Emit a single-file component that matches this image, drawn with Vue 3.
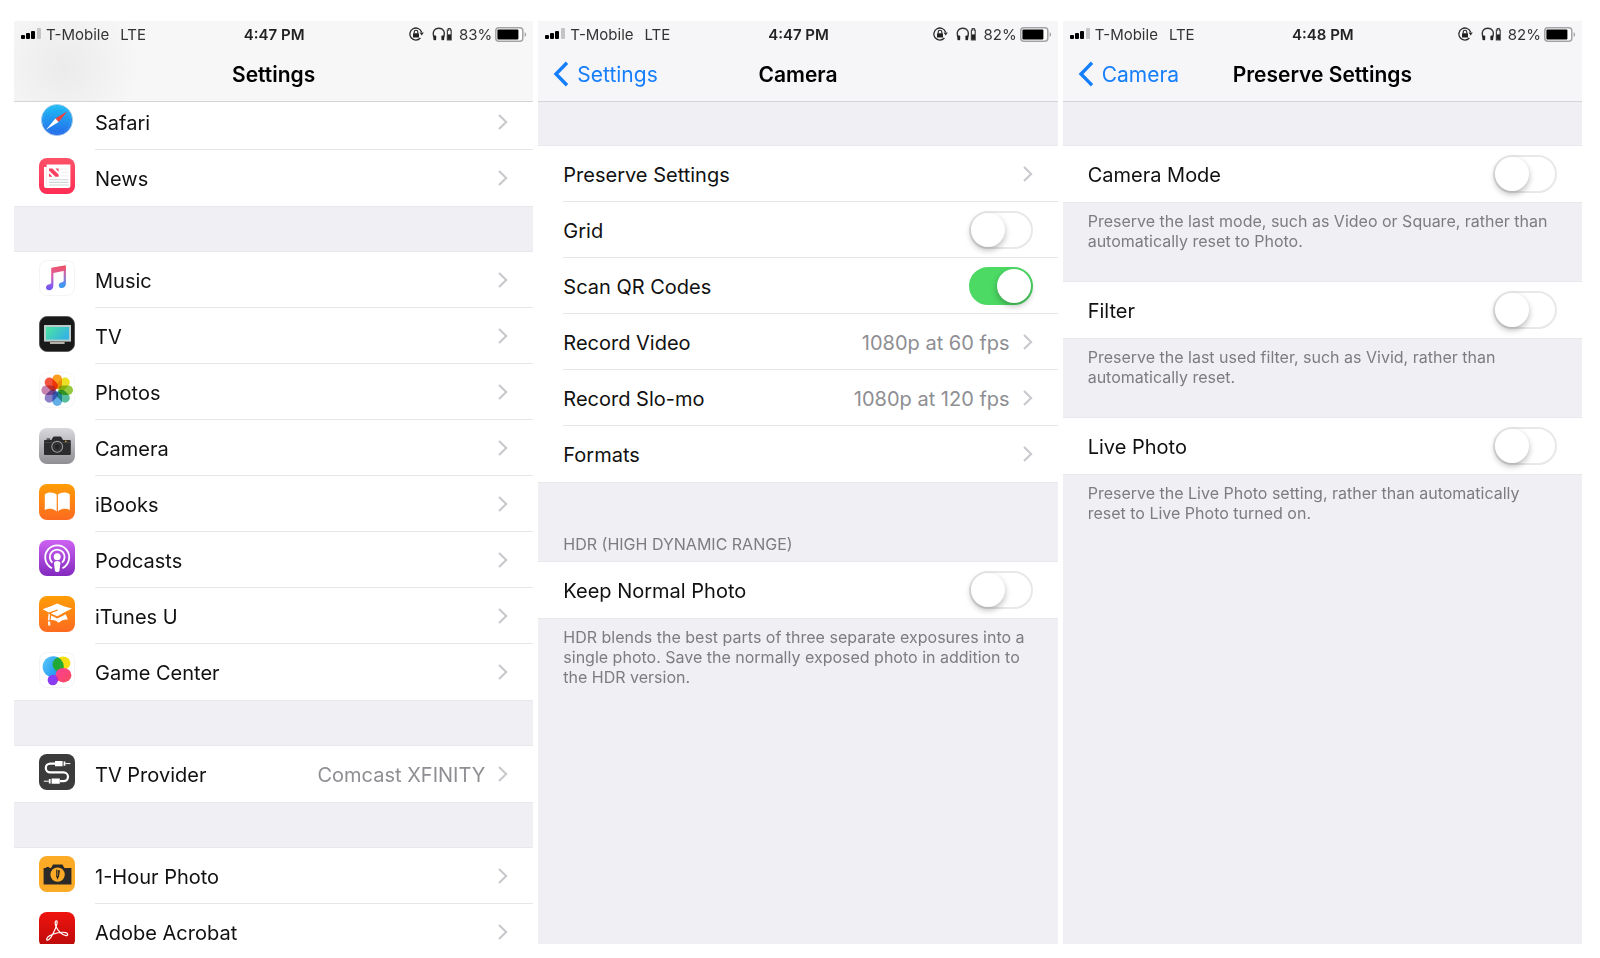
<script setup>
import { ref } from "vue";

const appGroups = [
  [
    { name: "Safari", icon: "safari" },
    { name: "News", icon: "news" },
  ],
  [
    { name: "Music", icon: "music" },
    { name: "TV", icon: "tv" },
    { name: "Photos", icon: "photos" },
    { name: "Camera", icon: "camera" },
    { name: "iBooks", icon: "ibooks" },
    { name: "Podcasts", icon: "podcasts" },
    { name: "iTunes U", icon: "itunesu" },
    { name: "Game Center", icon: "gamecenter" },
  ],
  [{ name: "TV Provider", icon: "tvprovider", value: "Comcast XFINITY" }],
  [
    { name: "1-Hour Photo", icon: "onehour" },
    { name: "Adobe Acrobat", icon: "acrobat" },
  ],
];

const cameraRows = ref([
  { name: "Preserve Settings" },
  { name: "Grid", toggle: true, on: false },
  { name: "Scan QR Codes", toggle: true, on: true },
  { name: "Record Video", value: "1080p at 60 fps" },
  { name: "Record Slo-mo", value: "1080p at 120 fps" },
  { name: "Formats" },
]);

const keepNormal = ref(false);

const preserveRows = ref([
  {
    name: "Camera Mode",
    on: false,
    note: "Preserve the last mode, such as Video or Square, rather than automatically reset to Photo.",
  },
  {
    name: "Filter",
    on: false,
    note: "Preserve the last used filter, such as Vivid, rather than automatically reset.",
  },
  {
    name: "Live Photo",
    on: false,
    note: "Preserve the Live Photo setting, rather than automatically reset to Live Photo turned on.",
  },
]);

const screens = [
  { id: "settings", title: "Settings", time: "4:47 PM", battery: 83 },
  { id: "camera", title: "Camera", back: "Settings", time: "4:47 PM", battery: 82 },
  { id: "preserve", title: "Preserve Settings", back: "Camera", time: "4:48 PM", battery: 82 },
];

const petals = [
  "#fb9d1e",
  "#ece024",
  "#93c83f",
  "#55bd9c",
  "#62aee6",
  "#8d80c8",
  "#c884b0",
  "#f2543f",
];
</script>

<template>
  <div class="screens">
    <section v-for="s in screens" :key="s.id" class="screen">
      <header class="top" :class="{ blurred: s.id === 'settings' }">
        <div class="status">
          <div class="status-left">
            <svg class="signal" width="21" height="12" viewBox="0 0 21 12">
              <rect x="0" y="7" width="4" height="4" rx="1" />
              <rect x="5" y="5" width="4" height="6" rx="1" />
              <rect x="10" y="3" width="4" height="8" rx="1" />
              <rect x="16" y="0" width="4" height="11" rx="1" fill="#c4c4c6" />
            </svg>
            <span>T-Mobile</span>
            <span class="network">LTE</span>
          </div>
          <div class="time">{{ s.time }}</div>
          <div class="status-right">
            <svg width="15" height="14" viewBox="0 0 15 14">
              <path
                d="M12.6 5.2A6 6 0 1 0 11.4 11"
                fill="none"
                stroke="#2a2a2a"
                stroke-width="1.3"
              />
              <path d="M10.6 5.6h4.2l-2.1 3z" fill="#2a2a2a" />
              <rect x="4" y="6.2" width="6" height="4.2" rx="0.5" fill="#222" />
              <path
                d="M5.2 6.4V5a1.8 1.8 0 0 1 3.6 0v1.4"
                fill="none"
                stroke="#222"
                stroke-width="1.1"
              />
            </svg>
            <svg class="phones" width="21" height="14" viewBox="0 0 21 14">
              <path
                d="M2.2 10.5C-.2 5 2.4 1.2 6.8 1.2s7 3.8 4.6 9.3"
                fill="none"
                stroke="#333"
                stroke-width="1.4"
              />
              <rect x="1.4" y="8.4" width="2.8" height="4.8" rx="1" fill="#222" />
              <rect x="9.4" y="8.4" width="2.8" height="4.8" rx="1" fill="#222" />
              <path
                d="M15.4 3.2h.9V1.6h2v1.6h.9v9.8h-3.8z"
                fill="none"
                stroke="#444"
                stroke-width="1.2"
              />
              <rect x="15.8" y="7.4" width="3.2" height="5.4" fill="#222" />
            </svg>
            <span>{{ s.battery }}%</span>
            <svg class="battery" width="32" height="15" viewBox="0 0 32 15">
              <rect
                x="0.8"
                y="0.8"
                width="27"
                height="13.4"
                rx="3"
                fill="#fff"
                stroke="#a3a3a5"
                stroke-width="1.5"
              />
              <rect x="2.4" y="2.6" width="21" height="9.8" rx="1" />
              <path d="M29.6 5.2c2 .6 2 4 0 4.6z" fill="#a3a3a5" />
            </svg>
          </div>
        </div>
        <nav class="navbar">
          <div class="nav-side">
            <a v-if="s.back" class="back" href="#">
              <svg width="16" height="26" viewBox="0 0 16 26">
                <path
                  d="M14 1.8L3 13l11 11.2"
                  fill="none"
                  stroke="#157efb"
                  stroke-width="3.4"
                />
              </svg>
              {{ s.back }}
            </a>
          </div>
          <h1>{{ s.title }}</h1>
          <div class="nav-side"></div>
        </nav>
      </header>

      <!-- Settings: app list, scrolled a little under the bar -->
      <main v-if="s.id === 'settings'" class="body scrolled">
        <ul v-for="(group, g) in appGroups" :key="g" class="group">
          <li v-for="app in group" :key="app.name">
            <a class="row" href="#">
              <svg class="app-icon" width="36" height="36" viewBox="0 0 36 36">
                <g v-if="app.icon === 'safari'">
                  <defs>
                    <linearGradient id="safari-bg" x1="0" y1="0" x2="0" y2="1">
                      <stop offset="0" stop-color="#1fc0f5" />
                      <stop offset="1" stop-color="#2568ea" />
                    </linearGradient>
                  </defs>
                  <circle cx="18" cy="18" r="15.6" fill="url(#safari-bg)" stroke="#a9cdea" stroke-width="0.8" />
                  <circle cx="18" cy="18" r="13.4" fill="none" stroke="#7cc4f4" stroke-width="1" stroke-dasharray="0.6 1.5" opacity="0.6" />
                  <path d="M28.4 9.2L16.4 16.4L19.6 20z" fill="#f0403c" />
                  <path d="M7 27.8L16.4 16.4L19.6 20z" fill="#fff" />
                </g>
                <g v-else-if="app.icon === 'news'">
                  <defs>
                    <linearGradient id="news-bg" x1="0" y1="0" x2="0" y2="1">
                      <stop offset="0" stop-color="#fc5268" />
                      <stop offset="1" stop-color="#fd2d55" />
                    </linearGradient>
                  </defs>
                  <rect width="36" height="36" rx="8" fill="url(#news-bg)" />
                  <path d="M5 9h2.6V6.6h23.8V28a2 2 0 0 1-2 2H7a2 2 0 0 1-2-2z" fill="#fff" />
                  <path d="M7.4 9v18" stroke="#fbd0d8" stroke-width="0.6" />
                  <path d="M10 10.4h3.4l6.2 6.2v2.2h-3.2L10 12.6z" fill="#f7405f" />
                  <path d="M16.4 10.4h3.2v3.4zM10 15.2l3.4 3.6H10z" fill="#f7405f" />
                  <path d="M22 11h7.6M22 14.4h7.6M22 17.8h7.6" stroke="#f3f1f3" stroke-width="1.2" />
                  <path d="M10 21.8h19.6M10 24.4h19.6M10 27h19.6" stroke="#cfd4d6" stroke-width="1.1" />
                </g>
                <g v-else-if="app.icon === 'music'">
                  <defs>
                    <linearGradient id="music-a" gradientUnits="userSpaceOnUse" x1="18" y1="5" x2="14" y2="30">
                      <stop offset="0" stop-color="#ee5064" />
                      <stop offset="0.4" stop-color="#e0609c" />
                      <stop offset="0.75" stop-color="#9a5fe6" />
                      <stop offset="1" stop-color="#6f55ee" />
                    </linearGradient>
                    <linearGradient id="music-b" gradientUnits="userSpaceOnUse" x1="26" y1="6" x2="24" y2="28">
                      <stop offset="0" stop-color="#ee5064" />
                      <stop offset="0.4" stop-color="#c06ab8" />
                      <stop offset="0.8" stop-color="#4d8ff0" />
                      <stop offset="1" stop-color="#3c9cf4" />
                    </linearGradient>
                  </defs>
                  <rect x="0.5" y="0.5" width="35" height="35" rx="8" fill="#fff" stroke="#f4f3f5" />
                  <path d="M12.2 9.2c0-1 .5-1.5 1.4-1.7L25.4 5.4c1-.2 1.5.2 1.5 1.1v3.9l-12.5 2.7v12.4c0 3-1.8 4.7-4.3 4.7-1.8 0-3.1-1-3.1-2.7 0-2 1.5-3 3.5-3.3 1.3-.2 1.7-.6 1.7-1.6z" fill="url(#music-a)" />
                  <path d="M24.7 9h2.2v14.4c0 2.8-1.8 4.6-4.1 4.6-1.8 0-3-1-3-2.6 0-1.9 1.4-2.9 3.3-3.2 1.2-.2 1.6-.6 1.6-1.6z" fill="url(#music-b)" />
                </g>
                <g v-else-if="app.icon === 'tv'">
                  <defs>
                    <linearGradient id="tv-screen" x1="0" y1="0" x2="1" y2="0.5">
                      <stop offset="0" stop-color="#4ce59f" />
                      <stop offset="1" stop-color="#35b5e0" />
                    </linearGradient>
                  </defs>
                  <rect x="0.4" y="0.4" width="35.2" height="35.2" rx="8" fill="#191919" stroke="#4a4a4a" stroke-width="0.8" />
                  <rect x="5" y="9" width="27" height="16.6" fill="#b9cbca" />
                  <rect x="7" y="11" width="23" height="12.6" fill="url(#tv-screen)" />
                  <rect x="11" y="26" width="14.6" height="2" fill="#b5b1a9" />
                </g>
                <g v-else-if="app.icon === 'photos'">
                  <rect x="0.5" y="0.5" width="35" height="35" rx="8" fill="#fff" stroke="#f7f6f8" />
                  <rect
                    v-for="(color, i) in petals"
                    :key="color"
                    class="petal"
                    x="13.4"
                    y="2.4"
                    width="9.6"
                    height="14.6"
                    rx="4.8"
                    :fill="color"
                    :transform="`rotate(${i * 45} 18.2 18.2)`"
                  />
                </g>
                <g v-else-if="app.icon === 'camera'">
                  <defs>
                    <linearGradient id="camera-bg" x1="0" y1="0" x2="0" y2="1">
                      <stop offset="0" stop-color="#d9d8dd" />
                      <stop offset="1" stop-color="#8f8e93" />
                    </linearGradient>
                  </defs>
                  <rect width="36" height="36" rx="8" fill="url(#camera-bg)" />
                  <path d="M7.6 10.4h3.6v1.4h-3.6z" fill="#3a3a3c" />
                  <path d="M6.2 12h6.2l1.6-2.8c.3-.5.6-.8 1.2-.8h6c.6 0 .9.3 1.2.8L24 12h6.6c.8 0 1.2.4 1.2 1.2v12.6c0 .8-.4 1.2-1.2 1.2H6.2c-.8 0-1.2-.4-1.2-1.2V13.2c0-.8.4-1.2 1.2-1.2z" fill="#2c2c2e" />
                  <path d="M5 14.6h26.8" stroke="#55555a" stroke-width="0.6" />
                  <circle cx="18.2" cy="18.8" r="6.4" fill="#2c2c2e" />
                  <circle cx="18.2" cy="18.8" r="5.4" fill="none" stroke="#9a9a9e" stroke-width="1.1" />
                  <circle cx="18.2" cy="18.8" r="3" fill="#232325" stroke="#4c4c50" stroke-width="0.6" />
                  <circle cx="26.8" cy="13.4" r="0.8" fill="#d9a43a" />
                </g>
                <g v-else-if="app.icon === 'ibooks'">
                  <defs>
                    <linearGradient id="ibooks-bg" x1="0" y1="0" x2="0" y2="1">
                      <stop offset="0" stop-color="#ff9d06" />
                      <stop offset="1" stop-color="#fc6b20" />
                    </linearGradient>
                  </defs>
                  <rect width="36" height="36" rx="8" fill="url(#ibooks-bg)" />
                  <path d="M17.7 10.6C15 8.2 9 7.8 5.8 10.4V26c3.2-2 9-2 11.9 1.4z" fill="#fff" />
                  <path d="M18.9 10.6C21.6 8.2 27.6 7.8 30.8 10.4V26c-3.2-2-9-2-11.9 1.4z" fill="#fff" />
                </g>
                <g v-else-if="app.icon === 'podcasts'">
                  <defs>
                    <linearGradient id="podcasts-bg" x1="0" y1="0" x2="0" y2="1">
                      <stop offset="0" stop-color="#cd62f2" />
                      <stop offset="1" stop-color="#8329bf" />
                    </linearGradient>
                  </defs>
                  <rect width="36" height="36" rx="8" fill="url(#podcasts-bg)" />
                  <path d="M13 28.2A12 12 0 1 1 23.4 28.2" fill="none" stroke="#fff" stroke-width="1.8" />
                  <path d="M13.4 22.6A7.4 7.4 0 1 1 23 22.6" fill="none" stroke="#fff" stroke-width="1.8" />
                  <circle cx="18.2" cy="16.8" r="3.5" fill="#fff" />
                  <path d="M15 23.2c0-3 6.4-3 6.4 0l-.9 7.2c-.4 2.2-4.2 2.2-4.6 0z" fill="#fff" />
                </g>
                <g v-else-if="app.icon === 'itunesu'">
                  <defs>
                    <linearGradient id="itunes-bg" x1="0" y1="0" x2="0" y2="1">
                      <stop offset="0" stop-color="#ff9d06" />
                      <stop offset="1" stop-color="#fc6b20" />
                    </linearGradient>
                  </defs>
                  <rect width="36" height="36" rx="8" fill="url(#itunes-bg)" />
                  <path d="M3.6 13.2C9 11.6 13.6 9.6 18.2 7.6C23 9.8 28 11.4 33 12.6C28 15.2 23.2 17.6 18.4 20.2C16 19 13.6 18.2 11.8 17.2L19 14.4L18.2 13.4L9.8 16.4C7.6 15.4 5.6 14.2 3.6 13.2z" fill="#fff" />
                  <path d="M9.6 17.6L11 18.2L10.6 24.2L9.8 24.4L8.8 24z" fill="#fff" />
                  <path d="M12.2 19.4L18.4 22.4L26.8 18.2L28.8 23.6C26 23 22.6 24 19.6 26.8C17.8 24.6 14.8 23.6 11.6 24z" fill="#fff" />
                  <path d="M9 25.4h2.2l.2 4.2H9.2z" fill="#fff" />
                </g>
                <g v-else-if="app.icon === 'gamecenter'">
                  <defs>
                    <linearGradient id="gc-blue" x1="0" y1="0" x2="1" y2="0.6">
                      <stop offset="0" stop-color="#5fc8f8" />
                      <stop offset="1" stop-color="#1492f0" />
                    </linearGradient>
                    <linearGradient id="gc-pink" x1="0" y1="0" x2="1" y2="1">
                      <stop offset="0" stop-color="#fb3f9a" />
                      <stop offset="1" stop-color="#fb4a5c" />
                    </linearGradient>
                    <clipPath id="gc-clip">
                      <circle cx="14.2" cy="14.8" r="10.6" />
                    </clipPath>
                  </defs>
                  <rect x="0.5" y="0.5" width="35" height="35" rx="8" fill="#fff" stroke="#f4f3f5" />
                  <circle cx="14.2" cy="14.8" r="10.6" fill="url(#gc-blue)" />
                  <ellipse cx="24" cy="11" rx="7.4" ry="6.6" fill="#f2de12" />
                  <circle cx="21" cy="12.4" r="7.4" fill="#22a835" clip-path="url(#gc-clip)" />
                  <ellipse cx="24.4" cy="23.2" rx="8" ry="7.2" fill="url(#gc-pink)" />
                  <circle cx="13.8" cy="28" r="5.2" fill="#8a3cf2" />
                  <path d="M17.2 24.2a8 8 0 0 0 1.6 5.2a5.2 5.2 0 0 0-1.6-5.2z" fill="#c321a8" />
                </g>
                <g v-else-if="app.icon === 'tvprovider'">
                  <rect width="36" height="36" rx="8" fill="#3b3b3c" />
                  <path d="M16 9.6H11.2a4.4 4.4 0 0 0 0 8.8h13.4a4.4 4.4 0 0 1 0 8.8H21" fill="none" stroke="#fff" stroke-width="2.2" />
                  <path d="M16 7h7.6v5.2H16zM24.6 7.4h1.8v4.4h-1.8z" fill="#fff" />
                  <path d="M26.4 9.6h5M4.8 27.2h5" stroke="#fff" stroke-width="1" />
                  <path d="M12.6 24.6h8.2v5.2h-8.2zM9.8 25h1.8v4.4H9.8z" fill="#fff" />
                </g>
                <g v-else-if="app.icon === 'onehour'">
                  <rect width="36" height="36" rx="8" fill="#fcab26" />
                  <path d="M4.6 12h2.6v-1h3v1h1.8l2-3.4h9.4l2 3.4h7v16.6H4.6z" fill="#2b2a28" />
                  <circle cx="18.6" cy="18.6" r="7.2" fill="#fcab26" />
                  <path d="M17.2 13.4l3.8 1.2-1 5.8-1.6 3.4-1.2-3.6z" fill="#2b2a28" />
                  <path d="M18.6 14v6" stroke="#fcab26" stroke-width="0.6" />
                </g>
                <g v-else>
                  <defs>
                    <linearGradient id="acrobat-bg" x1="0" y1="0" x2="0" y2="1">
                      <stop offset="0" stop-color="#f0140f" />
                      <stop offset="1" stop-color="#b90a0a" />
                    </linearGradient>
                  </defs>
                  <rect width="36" height="36" rx="8" fill="url(#acrobat-bg)" />
                  <path
                    d="M17.4 8.8c-1.8 0-1.4 3.6-.2 6.2 1.8 4 6.6 8.4 9.8 8.6 2.4 0 2.2-2.4-.4-3-4-1-11.2.4-16 3.2-3.4 2-3.6 4.6-2 4.4 2.2-.4 5.6-6.6 7.6-11.2 1.6-3.8 2.8-8.2 1.2-8.2z"
                    fill="none"
                    stroke="#fff"
                    stroke-width="1.2"
                  />
                </g>
              </svg>
              <span class="content">
                <span class="label">{{ app.name }}</span>
                <span v-if="app.value" class="value">{{ app.value }}</span>
                <svg class="chevron" width="10" height="16" viewBox="0 0 10 16">
                  <path d="M1 1L8.200 8L1 15" fill="none" stroke="#c7c7cc" stroke-width="2" />
                </svg>
              </span>
            </a>
          </li>
        </ul>
      </main>

      <!-- Camera -->
      <main v-else-if="s.id === 'camera'" class="body">
        <ul class="group">
          <li v-for="row in cameraRows" :key="row.name">
            <label v-if="row.toggle" class="row">
              <span class="content">
                <span class="label">{{ row.name }}</span>
                <input v-model="row.on" type="checkbox" class="switch" />
              </span>
            </label>
            <a v-else class="row" href="#">
              <span class="content">
                <span class="label">{{ row.name }}</span>
                <span v-if="row.value" class="value">{{ row.value }}</span>
                <svg class="chevron" width="10" height="16" viewBox="0 0 10 16">
                  <path d="M1 1L8.200 8L1 15" fill="none" stroke="#c7c7cc" stroke-width="2" />
                </svg>
              </span>
            </a>
          </li>
        </ul>
        <h2 class="group-title">HDR (HIGH DYNAMIC RANGE)</h2>
        <div class="group">
          <label class="row">
            <span class="content">
              <span class="label">Keep Normal Photo</span>
              <input v-model="keepNormal" type="checkbox" class="switch" />
            </span>
          </label>
        </div>
        <p class="note">
          HDR blends the best parts of three separate exposures into a single
          photo. Save the normally exposed photo in addition to the HDR version.
        </p>
      </main>

      <!-- Preserve Settings -->
      <main v-else class="body">
        <template v-for="row in preserveRows" :key="row.name">
          <div class="group">
            <label class="row">
              <span class="content">
                <span class="label">{{ row.name }}</span>
                <input v-model="row.on" type="checkbox" class="switch" />
              </span>
            </label>
          </div>
          <p class="note">{{ row.note }}</p>
        </template>
      </main>
    </section>
  </div>
</template>

<style>
body {
  margin: 0;
  background: #fff;
}
</style>

<style scoped>
* {
  margin: 0;
  padding: 0;
  box-sizing: border-box;
}
.screens {
  display: grid;
  grid-template-columns: repeat(3, minmax(0, 1fr));
  gap: 5px;
  height: 100vh;
  padding: 21px 18px 14px 14px;
  font-family: Inter, "Liberation Sans", sans-serif;
  color: #111;
}
.screen {
  display: flex;
  flex-direction: column;
  overflow: hidden;
  background: #efeff4;
}
.top {
  position: relative;
  z-index: 1;
  flex: none;
  background: #f6f6f8;
  border-bottom: 1px solid #d5d5d9;
}
.top.blurred {
  background: radial-gradient(circle at 50px 46px, #ebebeb 0, #f7f7f7 76px);
}
.status {
  display: grid;
  grid-template-columns: 1fr auto 1fr;
  align-items: center;
  height: 26px;
  padding: 0 6px 0 7px;
  font-size: 15px;
  color: #333;
}
.status-left,
.status-right {
  display: flex;
  align-items: center;
}
.signal {
  margin-right: 4px;
}
.network {
  margin-left: 11px;
}
.time {
  font-weight: 600;
  color: #222;
}
.status-right {
  justify-content: flex-end;
}
.phones {
  margin: 0 6px 0 8px;
}
.battery {
  margin-left: 3px;
}
.navbar {
  display: grid;
  grid-template-columns: 1fr auto 1fr;
  align-items: center;
  height: 54px;
  padding: 0 15px;
}
.navbar h1 {
  font-size: 21px;
  font-weight: 600;
  color: #000;
}
.back {
  display: flex;
  align-items: center;
  gap: 8px;
  font-size: 21px;
  color: #157efb;
  text-decoration: none;
}
.body {
  padding-top: 43px;
}
.scrolled {
  margin-top: -9px;
  padding-top: 0;
}
.group {
  list-style: none;
  background: #fff;
  border-top: 1px solid #e8e8ec;
  border-bottom: 1px solid #e8e8ec;
}
.group + .group {
  margin-top: 44px;
}
.row {
  display: flex;
  align-items: center;
  height: 56px;
  padding-left: 25px;
  color: inherit;
  text-decoration: none;
  cursor: pointer;
}
.app-icon {
  flex: none;
  margin: 0 20px 4px 0;
}
.petal {
  mix-blend-mode: multiply;
}
.content {
  display: flex;
  flex: 1;
  align-items: center;
  height: 100%;
  padding-right: 25px;
  border-bottom: 1px solid #e6e6e9;
  font-size: 20px;
}
li:last-child .content,
div.group .content {
  border-bottom: 0;
}
.label,
.value {
  padding-top: 2px;
}
.label {
  flex: 1;
}
.value {
  color: #8e8e93;
}
.chevron {
  margin-left: 13px;
}
.switch {
  appearance: none;
  position: relative;
  width: 64px;
  height: 38px;
  border: 2px solid #e8e8e8;
  border-radius: 19px;
  background: #fff;
  cursor: pointer;
}
.switch::before {
  content: "";
  position: absolute;
  top: 0;
  left: 0;
  width: 34px;
  height: 34px;
  border-radius: 50%;
  background: #fff;
  box-shadow: 0 3px 6px rgba(0, 0, 0, 0.28);
}
.switch:checked {
  border-color: #4cd964;
  background: #4cd964;
}
.switch:checked::before {
  left: 26px;
}
.group-title {
  padding: 51px 25px 7px;
  font-size: 16px;
  font-weight: 400;
  line-height: 20px;
  color: #7c7c81;
}
.note {
  padding: 8px 25px 30px;
  font-size: 16px;
  line-height: 20px;
  color: #7c7c81;
}
</style>
